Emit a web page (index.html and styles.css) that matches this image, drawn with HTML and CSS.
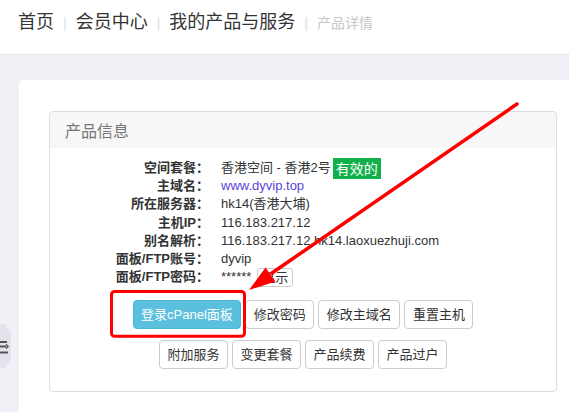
FILE: index.html
```html
<!DOCTYPE html>
<html lang="zh-CN">
<head>
<meta charset="utf-8">
<title>产品详情</title>
<link rel="stylesheet" href="styles.css">
</head>
<body>
<header class="topbar">
  <nav class="crumbs">
    <span class="crumb">首页</span><span class="sep">|</span><span class="crumb">会员中心</span><span class="sep">|</span><span class="crumb">我的产品与服务</span><span class="sep">|</span><span class="crumb current">产品详情</span>
  </nav>
</header>
<div class="main">
  <div class="side-tab">
    <svg width="12" height="44" viewBox="0 0 12 44">
      <polygon points="0,0 5,0 11,9 11,35 5,44 0,44" fill="#e3e4eb"/>
      <g stroke="#555" stroke-width="2" fill="none">
        <line x1="0" y1="18" x2="7" y2="18"/>
        <line x1="0" y1="22.5" x2="6" y2="22.5"/>
        <line x1="0" y1="28.5" x2="8" y2="28.5"/>
        <polyline points="6,20.5 8,22.5 6,24.5" stroke-width="1.5"/>
      </g>
    </svg>
  </div>
  <div class="card">
    <section class="panel">
      <div class="panel-heading">产品信息</div>
      <div class="panel-body">
        <div class="info">
          <div class="label">空间套餐：</div>
          <div class="value"><span>香港空间 - 香港2号</span><span class="badge">有效的</span></div>
          <div class="label">主域名：</div>
          <div class="value"><a class="link">www.dyvip.top</a></div>
          <div class="label">所在服务器：</div>
          <div class="value">hk14(香港大埔)</div>
          <div class="label">主机IP：</div>
          <div class="value">116.183.217.12</div>
          <div class="label">别名解析：</div>
          <div class="value">116.183.217.12.hk14.laoxuezhuji.com</div>
          <div class="label">面板/FTP账号：</div>
          <div class="value">dyvip</div>
          <div class="label">面板/FTP密码：</div>
          <div class="value"><span>******</span><span class="btn-mini">显示</span></div>
        </div>
        <div class="actions">
          <span class="btn btn-info">登录cPanel面板</span>
          <span class="btn">修改密码</span>
          <span class="btn">修改主域名</span>
          <span class="btn">重置主机</span>
        </div>
        <div class="actions second">
          <span class="btn">附加服务</span>
          <span class="btn">变更套餐</span>
          <span class="btn">产品续费</span>
          <span class="btn">产品过户</span>
        </div>
      </div>
    </section>
  </div>
</div>
<svg class="annotation" width="569" height="412" viewBox="0 0 569 412">
  <rect x="111.5" y="291.5" width="133" height="44.7" rx="3" fill="none" stroke="#ff0000" stroke-width="3"/>
  <line x1="517" y1="104" x2="272" y2="273" stroke="#ff0000" stroke-width="3.5" stroke-linecap="round"/>
  <polygon points="249,290 275.5,281.5 265.5,267.5" fill="#ff0000"/>
</svg>
</body>
</html>
```

FILE: styles.css
```css
html, body {
  margin: 0;
  padding: 0;
}
body {
  width: 569px;
  height: 412px;
  overflow: hidden;
  background: #f0f1f6;
  font-family: "Liberation Sans", "Noto Sans CJK SC", sans-serif;
  color: #333;
  position: relative;
}
.topbar {
  height: 55px;
  background: #fff;
  border-bottom: 1px solid #e6e7ed;
  box-sizing: border-box;
}
.crumbs {
  padding: 7px 0 0 18px;
  font-size: 18px;
  line-height: 26px;
  font-family: "Noto Sans CJK SC", "Liberation Sans", sans-serif;
  color: #333;
}
.sep {
  color: #dcdde2;
  font-size: 14px;
  margin: 0 9px;
  font-family: "Liberation Sans", sans-serif;
}
.crumb.current {
  font-size: 14px;
  color: #c5c7cc;
}
.main {
  position: relative;
  padding: 25px 0 0 19px;
}
.side-tab {
  position: absolute;
  left: 0;
  top: 269px;
  width: 12px;
  height: 44px;
}
.side-tab svg {
  display: block;
}
.card {
  background: #fff;
  border-radius: 4px 0 0 0;
  padding: 31px 12px 30px 30px;
  height: 340px;
  box-sizing: border-box;
}
.panel {
  border: 1px solid #dddddd;
  border-radius: 4px;
  background: #fff;
}
.panel-heading {
  height: 36px;
  line-height: 36px;
  padding: 0 15px;
  background: #f7f7f7;
  border-radius: 4px 4px 0 0;
  font-size: 16px;
  color: #777;
  font-family: "Noto Sans CJK SC", "Liberation Sans", sans-serif;
}
.panel-body {
  padding: 11px 0 22px 0;
}
.info {
  display: grid;
  grid-template-columns: 159px 1fr;
  grid-auto-rows: 18.2px;
  column-gap: 12px;
  font-size: 13px;
}
.label {
  text-align: right;
  font-weight: bold;
  line-height: 18.2px;
  white-space: nowrap;
}
.value {
  display: flex;
  align-items: center;
  line-height: 18.2px;
  white-space: nowrap;
}
.link {
  color: #5a3fd8;
}
.badge {
  display: inline-block;
  margin-left: 2px;
  height: 21px;
  line-height: 21px;
  padding: 0 3px;
  background: #12b04a;
  color: #fff;
  font-size: 14px;
  font-family: "Noto Sans CJK SC", sans-serif;
  flex: none;
}
.btn-mini {
  display: inline-block;
  margin-left: 6px;
  height: 19px;
  line-height: 17px;
  padding: 0 4px;
  border: 1px solid #ccc;
  border-radius: 3px;
  box-sizing: border-box;
  font-size: 13px;
  color: #333;
  flex: none;
}
.actions {
  display: flex;
  justify-content: center;
  gap: 4px;
  margin-top: 14px;
}
.actions.second {
  margin-top: 11px;
}
.btn {
  display: inline-block;
  height: 29px;
  line-height: 27px;
  padding: 0 7.5px;
  border: 1px solid #ccc;
  border-radius: 4px;
  box-sizing: border-box;
  background: #fff;
  color: #333;
  font-size: 13px;
  white-space: nowrap;
}
.btn-info {
  background: #5bc0de;
  border-color: #46b8da;
  color: #fff;
}
.annotation {
  position: absolute;
  left: 0;
  top: 0;
  pointer-events: none;
}
```
